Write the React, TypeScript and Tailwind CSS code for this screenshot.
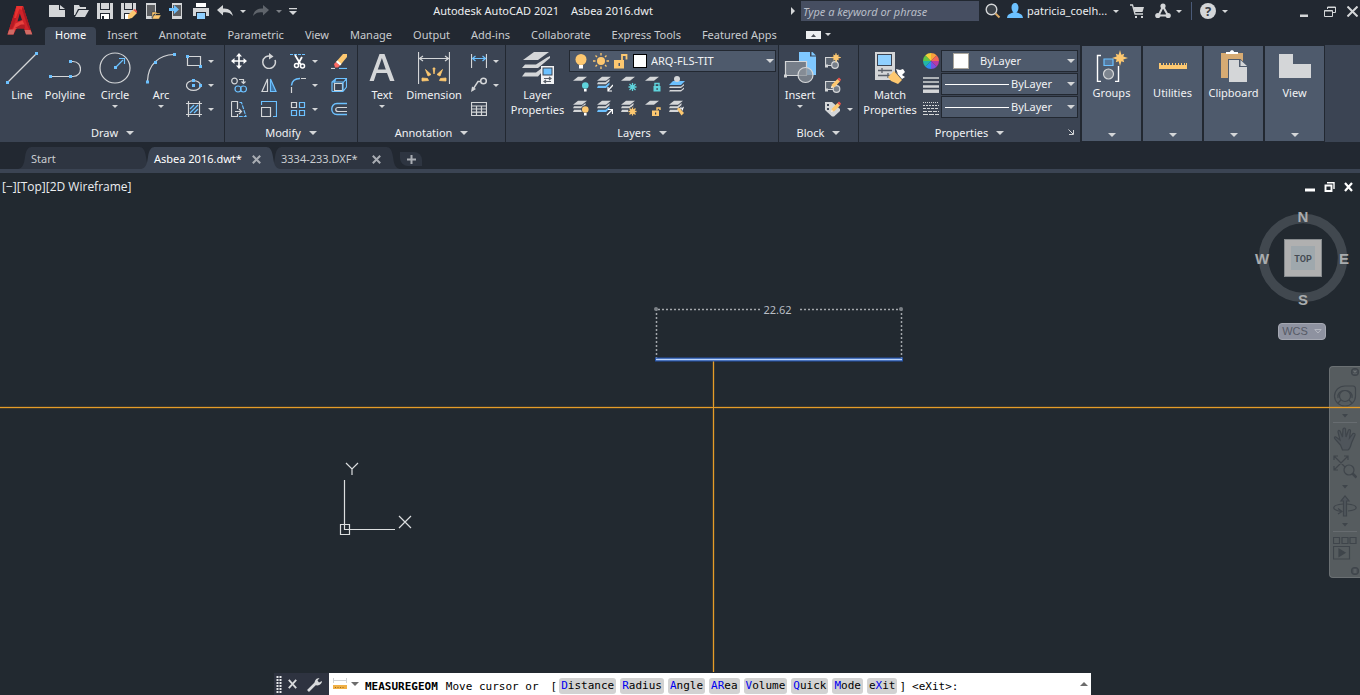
import React from "react";

const B = "#6cc1ff";
const G = "#d4d6d8";
const Y = "#fdc870";
const T = "#5fd3dc";

type Kids = { children?: React.ReactNode };

function Ico({ children, s = 16 }: Kids & { s?: number }) {
  return (
    <svg width={s} height={s} viewBox={`0 0 ${s} ${s}`} fill="none" stroke={G} strokeWidth="1.2" className="block shrink-0" aria-hidden="true">
      {children}
    </svg>
  );
}

function Caret({ big = false, className = "" }: { big?: boolean; className?: string }) {
  return big ? (
    <svg width="8" height="4" viewBox="0 0 8 4" className={"block shrink-0 " + className} aria-hidden="true">
      <path d="M0 0H8L4 4Z" fill="#d4d6d8" />
    </svg>
  ) : (
    <svg width="6" height="3" viewBox="0 0 6 3" className={"block shrink-0 " + className} aria-hidden="true">
      <path d="M0 0H6L3 3Z" fill="#d4d6d8" />
    </svg>
  );
}

function Dot({ x, y, c = B }: { x: number; y: number; c?: string }) {
  return <rect x={x - 1.5} y={y - 1.5} width="3" height="3" fill={c} stroke="none" />;
}

/* ---------- shared icon parts ---------- */

function Stack({ blue = -1, n = 3 }: { blue?: number; n?: number }) {
  return (
    <g stroke="none" fill={G}>
      <path d="M5 .7H14L9 4.800H0Z" />
      {n > 1 && <path d="M1 6.300H8.500L12.500 3V5L9 8.300H0Z" fill={blue === 1 ? B : G} />}
      {n > 2 && <path d="M1 9.800H8.500L12.500 6.500V8.500L9 12H0Z" fill={blue > 0 ? B : G} />}
    </g>
  );
}

function Bulb({ x, y, c }: { x: number; y: number; c: string }) {
  return (
    <g stroke="none">
      <circle cx={x} cy={y} r="4.2" fill="#3b4453" />
      <circle cx={x} cy={y} r="3.3" fill={c} />
      <rect x={x - 1.3} y={y + 3.4} width="2.6" height="2.6" fill="#fff" />
    </g>
  );
}

function Burst({ x, y, r = 5 }: { x: number; y: number; r?: number }) {
  const pts = Array.from({ length: 16 }, (_, i) => {
    const a = (i * Math.PI) / 8;
    const k = i % 2 ? r * 0.45 : i % 4 ? r * 0.75 : r;
    return `${x + Math.sin(a) * k},${y - Math.cos(a) * k}`;
  });
  return <polygon points={pts.join(" ")} fill={Y} stroke="none" />;
}

function Pencil() {
  return (
    <g stroke="none">
      <path d="M7 7.5L12.5 2L15 4.5L9.5 10L6 11Z" fill={Y} />
      <path d="M12.5 2L14 .5L16 2.5L15 4.5Z" fill="#f0544c" />
      <path d="M6 11L6.8 8.8L8.2 10.3Z" fill="#fff" />
    </g>
  );
}

/* ---------- logo ---------- */

function Logo() {
  return (
    <svg width="26" height="29" viewBox="0 0 26 29" aria-label="AutoCAD" role="img">
      <path d="M9.500 0H16L25 28H19L17 22.500H9.500L6.500 28.500H.5Z" fill="#cf2229" />
      <path d="M9.500 0L13 1L6 21L.5 28.500Z" fill="#b51c24" />
      <path d="M9.500 0H16L17.500 5L12.500 3L9 12L7 12Z" fill="#e8322f" />
      <path d="M16 0L25 28L20.500 20L15 3Z" fill="#a81a22" />
      <path d="M12.800 7.500L15 14L10.500 15.500Z" fill="#222831" />
      <path d="M15.500 14.500L17.500 18.500L5.500 24.500L8.500 17.500Z" fill="#e8423e" />
      <path d="M8 22L14 18.500L17.500 18.500L18 22.500Z" fill="#b31c24" />
      <path d="M.5 28.500L2.200 23.500L8 23.500L6.500 28.500ZM19 28.500L17.500 24H23.500L25.300 28.500Z" fill="#d06a64" />
    </svg>
  );
}

/* ---------- quick access ---------- */

const quick: { name: string; icon: React.ReactNode }[] = [
  { name: "New", icon: <path d="M0 2H10V7H16V14H0ZM11 2L16 6H11Z" fill={G} stroke="none" /> },
  { name: "Open", icon: <path d="M1 2H6L7 4H13V6H5L2 12H1ZM6 7H16L12 14H2Z" fill={G} stroke="none" /> },
  {
    name: "Save",
    icon: (
      <g stroke="none">
        <path d="M0 0H16V16H0Z" fill={G} />
        <path d="M3 0H13V7H3Z" fill="#222831" />
        <path d="M4 0H12V6H4Z" fill={G} />
        <path d="M3 10H13V16H3Z" fill="#222831" />
        <path d="M4 11H12V16H4Z" fill="#fff" />
        <path d="M5 13H7V16H5Z" fill="#222831" />
      </g>
    ),
  },
  {
    name: "Save As",
    icon: (
      <g stroke="none">
        <path d="M0 0H15V8L8 16H0Z" fill={G} />
        <path d="M3 0H12V7H3Z" fill="#222831" />
        <path d="M4 0H11V6H4Z" fill={G} />
        <path d="M3 10H10L7 16H3Z" fill="#222831" />
        <path d="M4 11H8V16H4Z" fill="#fff" />
        <path d="M7 12L12 7L16 10L11 15L7 16Z" fill={Y} />
        <path d="M12 7L14 6L16 8V10Z" fill="#f0544c" />
      </g>
    ),
  },
  {
    name: "Open from Web",
    icon: (
      <g stroke="none">
        <path d="M1 0H11V16H1Z" fill={G} />
        <path d="M2 2H10V13H2Z" fill="#5d5f62" />
        <path d="M7 9H11L12 10H15V11H9L7 15ZM9 12H16L14 16H7Z" fill={Y} stroke="#222831" strokeWidth=".4" />
      </g>
    ),
  },
  {
    name: "Save to Web",
    icon: (
      <g stroke="none">
        <path d="M3 0H13V16H3Z" fill={G} />
        <path d="M4 2H12V13H4Z" fill="#5d5f62" />
        <path d="M0 5H5V2L10 6.500L5 11V8H0Z" fill={B} />
      </g>
    ),
  },
  {
    name: "Plot",
    icon: (
      <g stroke="none">
        <path d="M3 0H13V4H3Z" fill="#fff" />
        <path d="M0 5H16V13H13V9H3V13H0Z" fill={G} />
        <path d="M4 10H12V16H4Z" fill="#8fd0ff" />
      </g>
    ),
  },
];

function TinyBtn({ label, className, children }: Kids & { label: string; className: string }) {
  return (
    <button type="button" aria-label={label} className={"flex h-full shrink-0 items-center justify-center " + className}>
      {children}
    </button>
  );
}

function TitleBar() {
  return (
    <div className="flex h-[22px] items-center text-[11px] text-[#eceef0]">
      {quick.map((q) => (
        <TinyBtn key={q.name} label={q.name} className="w-6">
          <Ico>{q.icon}</Ico>
        </TinyBtn>
      ))}
      <TinyBtn label="Undo" className="w-6">
        <Ico>
          <path d="M0 7L6 2V5.500C12 5 15 8 16 13C13 9.500 10 9 6 9.500V12.500Z" fill={G} stroke="none" />
        </Ico>
      </TinyBtn>
      <TinyBtn label="Undo list" className="w-3">
        <Caret />
      </TinyBtn>
      <TinyBtn label="Redo" className="w-6">
        <Ico>
          <path d="M16 7L10 2V5.500C4 5 1 8 0 13C3 9.500 6 9 10 9.500V12.500Z" fill="#5f646b" stroke="none" />
        </Ico>
      </TinyBtn>
      <TinyBtn label="Redo list" className="w-3">
        <Caret className="opacity-50" />
      </TinyBtn>
      <TinyBtn label="Customize Quick Access Toolbar" className="w-4">
        <svg width="8" height="7" viewBox="0 0 8 7" aria-hidden="true">
          <path d="M0 0H8V1.200H0ZM0 3H8L4 7Z" fill={G} />
        </svg>
      </TinyBtn>
      <div className="flex flex-1 justify-center gap-3 whitespace-nowrap">
        <h1>Autodesk AutoCAD 2021</h1>
        <span>Asbea 2016.dwt</span>
      </div>
      <TinyBtn label="Hide search" className="w-4">
        <svg width="4" height="8" viewBox="0 0 4 8" aria-hidden="true">
          <path d="M0 0V8L4 4Z" fill={G} />
        </svg>
      </TinyBtn>
      <input
        aria-label="Search"
        placeholder="Type a keyword or phrase"
        className="h-5 w-[178px] min-w-0 bg-[#464e61] px-0.5 text-[11px] italic text-white outline-none placeholder:text-[#b9bec8]"
      />
      <TinyBtn label="Search help" className="w-7">
        <Ico>
          <circle cx="6.500" cy="6.500" r="5.300" stroke={G} strokeWidth="1.400" fill="#3a4047" />
          <path d="M10.500 10.500L14.500 14.500" stroke="#d9a866" strokeWidth="2" />
        </Ico>
      </TinyBtn>
      <button type="button" className="flex h-full shrink-0 items-center gap-1">
        <Ico>
          <path d="M4.500 4.500C4.500 1.500 6 0 8 0C10 0 11.500 1.500 11.500 4.500C11.500 7 10.500 8.500 9.500 9.500C13 10.500 15.500 11 16 15H0C.5 11 3 10.500 6.500 9.500C5.500 8.500 4.500 7 4.500 4.500Z" fill={B} stroke="none" />
        </Ico>
        <span className="w-[82px] text-left">patricia_coelh...</span>
        <Caret />
      </button>
      <TinyBtn label="App store" className="w-9">
        <Ico>
          <path d="M1 2H3.500L6 11H14" strokeWidth="1.300" />
          <path d="M4.500 4H15L13.500 9H5.800Z" fill={G} stroke="none" />
          <path d="M6 13H8V15H6ZM12 13H14V15H12Z" fill={G} stroke="none" />
        </Ico>
      </TinyBtn>
      <TinyBtn label="Autodesk App" className="w-4">
        <Ico>
          <path d="M8 3.500L3.500 12.500H13" stroke={G} strokeWidth="2" />
          <path d="M8 3.500L12.500 11.500" stroke={G} strokeWidth="2" />
          <g fill={G} stroke="none">
            <circle cx="8" cy="3" r="2.600" />
            <circle cx="2.800" cy="12.500" r="2.600" />
            <circle cx="13.200" cy="12.500" r="2.600" />
          </g>
        </Ico>
      </TinyBtn>
      <TinyBtn label="Autodesk App list" className="w-4">
        <Caret />
      </TinyBtn>
      <span className="ml-1 mr-2 h-[18px] w-px bg-[#4a5a78]" />
      <TinyBtn label="Help" className="w-4">
        <span className="flex size-4 items-center justify-center rounded-full bg-[#d4d6d8] text-[13px] font-bold leading-4 text-[#3a4047]">?</span>
      </TinyBtn>
      <TinyBtn label="Help list" className="w-[18px]">
        <Caret />
      </TinyBtn>
      <span className="w-[58px]" />
      <TinyBtn label="Minimize" className="w-6">
        <svg width="8" height="12" viewBox="0 0 8 12" aria-hidden="true">
          <path d="M0 9.500H8V12H0Z" fill={G} />
        </svg>
      </TinyBtn>
      <TinyBtn label="Restore" className="w-7">
        <svg width="12" height="11" viewBox="0 0 12 11" fill="none" stroke={G} aria-hidden="true">
          <path d="M3.500 3V1H11.500V6.500H9M.5 4.500H8.500V10.500H.5ZM3.500 1.500H11.500M.5 5H8.500" />
        </svg>
      </TinyBtn>
      <TinyBtn label="Close" className="w-4">
        <svg width="11" height="11" viewBox="0 0 11 11" stroke={G} strokeWidth="2" aria-hidden="true">
          <path d="M.5.5L10.500 10.500M10.500.5L.5 10.500" />
        </svg>
      </TinyBtn>
    </div>
  );
}

const menus = ["Home", "Insert", "Annotate", "Parametric", "View", "Manage", "Output", "Add-ins", "Collaborate", "Express Tools", "Featured Apps"];

function MenuTabs() {
  return (
    <nav className="flex h-[23px] items-end gap-px text-[11px] text-[#c9ccd0]">
      {menus.map((m, i) => (
        <button
          key={m}
          type="button"
          className={"h-[18px] shrink-0 rounded-t-sm px-2.5 pb-0.5 leading-[16px] " + (i === 0 ? "bg-[#3b4453] text-white" : "")}
        >
          {m}
        </button>
      ))}
      <button type="button" aria-label="Minimize ribbon" className="mb-1.5 ml-[18px] flex h-2 w-[15px] items-center justify-center bg-[#eceef0]">
        <svg width="5" height="3" viewBox="0 0 5 3" aria-hidden="true">
          <path d="M0 3H5L2.500 0Z" fill="#4a4f57" />
        </svg>
      </button>
      <button type="button" aria-label="Ribbon options" className="mb-2 ml-0.5 p-px">
        <Caret />
      </button>
    </nav>
  );
}

/* ---------- ribbon ---------- */

function Big({ label, lines, icon, drop, className }: { label?: string; lines?: string[]; icon: React.ReactNode; drop?: boolean; className: string }) {
  return (
    <button type="button" className={"flex shrink-0 flex-col items-center self-start pt-[3px] text-[11px] leading-[15px] " + className}>
      <Ico s={32}>{icon}</Ico>
      <span className="mt-[3px] flex flex-col items-center whitespace-nowrap">
        {lines ? lines.map((l) => <span key={l}>{l}</span>) : label}
      </span>
      {drop && <Caret className="mt-[3px]" />}
    </button>
  );
}

function Small({ label, icon, drop }: { label: string; icon: React.ReactNode; drop?: boolean }) {
  return (
    <div className="flex h-6 items-center">
      <button type="button" aria-label={label} className="flex h-6 w-6 items-center justify-center">
        <Ico>{icon}</Ico>
      </button>
      {drop && (
        <button type="button" aria-label={label + " list"} className="flex h-6 w-2.5 items-center justify-center">
          <Caret />
        </button>
      )}
    </div>
  );
}

function Panel({ title, className, children, launcher }: Kids & { title: string; className: string; launcher?: boolean }) {
  return (
    <section className={"flex shrink-0 flex-col border-r border-[#222831] bg-[#3b4453] text-[#f1f2f4] " + className}>
      <div className="flex flex-1 items-start pt-1">{children}</div>
      <div className="relative flex h-[19px] shrink-0 items-center justify-center">
        <button type="button" className="flex items-center gap-2 text-[11px] leading-[18px]">
          {title}
          <Caret big />
        </button>
        {launcher && (
          <button type="button" aria-label={title + " settings"} className="absolute right-1.5 top-1.5">
            <svg width="6" height="6" viewBox="0 0 6 6" fill="none" stroke={G} aria-hidden="true">
              <path d="M.5.5L5 5M5.500 1V5.500H1" />
            </svg>
          </button>
        )}
      </div>
    </section>
  );
}

function Draw() {
  return (
    <Panel title="Draw" className="ml-px w-[224px]">
      <Big label="Line" className="w-[42px]" icon={<><path d="M2 30L30 2" /><Dot x={1.5} y={30.5} /><Dot x={30.5} y={1.5} /></>} />
      <Big
        label="Polyline"
        className="w-[44px]"
        icon={<><path d="M1 24.500H21M22 9.500H24C34 9.500 34 24.500 24 24.500H22" /><Dot x={1.5} y={24.5} /><Dot x={21.5} y={24.5} /><Dot x={21.5} y={9.5} /></>}
      />
      <Big
        label="Circle"
        drop
        className="w-[56px]"
        icon={<><circle cx="16" cy="16" r="15" /><path d="M16 16L24 8M20 6.500H25.500V12" stroke={B} /><Dot x={16.5} y={15.5} /></>}
      />
      <Big
        label="Arc"
        drop
        className="w-[36px]"
        icon={<><path d="M2.500 29C3 12 14 3 29 2.500" /><Dot x={2.5} y={30} /><Dot x={10.5} y={10.5} /><Dot x={29.5} y={2.5} /></>}
      />
      <div className="ml-[3px]">
        <Small label="Rectangle" drop icon={<><path d="M1.500 3.500H14.500V12.500H1.500Z" /><Dot x={1.5} y={3.5} /><Dot x={14.5} y={13.5} /></>} />
        <Small label="Ellipse" drop icon={<><ellipse cx="7.500" cy="8.500" rx="7" ry="4.800" /><Dot x={7.5} y={3.5} /><Dot x={7.5} y={8.5} /><Dot x={14.5} y={8.5} /></>} />
        <Small
          label="Hatch"
          drop
          icon={<><path d="M0 2.500H16M0 13.500H16M2.500 0V16M13.500 0V16" /><path d="M4 8L8 4M4 12L12 4M8 12L12 8" stroke={B} strokeWidth="1.300" /></>}
        />
      </div>
    </Panel>
  );
}

function Modify() {
  return (
    <Panel title="Modify" className="w-[133px]">
      <div className="ml-0.5">
        <Small
          label="Move"
          icon={<><path d="M8 1V15M1 8H15" stroke="#fff" strokeWidth="1.600" /><path d="M8 0L11 3.500H5ZM8 16L11 12.500H5ZM0 8L3.500 5V11ZM16 8L12.500 5V11Z" fill="#fff" stroke="none" /></>}
        />
        <Small
          label="Copy"
          icon={<><circle cx="3.500" cy="4" r="2.800" /><path d="M8 2.500H12.500V6M10.500 4.500L12.500 6.500L14.500 4.500" /><circle cx="7" cy="12" r="3" stroke={B} /><circle cx="12.500" cy="12" r="3" stroke={B} /></>}
        />
        <Small label="Stretch" icon={<><path d="M.5 .5H6.500V8M.5 .5V15.500H6.500V13" /><path d="M4 10.500H10M8 8L10.500 10.500L8 13" /><path d="M8.500 1.500H10.500L15 15.500H8" stroke={B} strokeDasharray="4 1" /></>} />
      </div>
      <div className="ml-1.5">
        <Small label="Rotate" icon={<><path d="M10 3.200A6.300 6.300 0 1 0 14 7" strokeWidth="1.500" /><path d="M8 0L12.500 3.500L8 6.500Z" fill={G} stroke="none" /></>} />
        <Small label="Mirror" icon={<><path d="M6.500 2V14.500H1Z" /><path d="M9.500 2V14.500H15Z" stroke={B} fill="#3f74a5" /></>} />
        <Small label="Scale" icon={<><path d="M.5 6.500H9.500V15.500H.5Z" /><path d="M.5 4V.5H15.500V15.500H12" stroke={B} /></>} />
      </div>
      <div className="ml-[5px]">
        <Small
          label="Trim"
          drop
          icon={<><path d="M0 1.500H16" stroke={B} strokeDasharray="3 1" /><path d="M5 2L11 12M12 4L8 11" stroke="#fff" strokeWidth="1.800" /><circle cx="6.500" cy="12.500" r="2" stroke="#fff" strokeWidth="1.500" /><circle cx="12.500" cy="13" r="2" stroke="#fff" strokeWidth="1.500" /></>}
        />
        <Small label="Fillet" drop icon={<><path d="M1.500 16V10M11 1.500H16" /><path d="M1.500 8.500C2 4 5 1.500 10 1.500" stroke={B} strokeWidth="1.500" /></>} />
        <Small
          label="Array"
          drop
          icon={<><path d="M1.500 1.500H6.500V6.500H1.500Z" /><path d="M9.500 1.500H14.500V6.500H9.500ZM1.500 9.500H6.500V14.500H1.500ZM9.500 9.500H14.500V14.500H9.500Z" stroke={B} /></>}
        />
      </div>
      <div className="ml-[7px]">
        <Small
          label="Erase"
          icon={<><path d="M0 15.500H4" /><path d="M8 15.500H16" stroke={B} /><path d="M5 9L12 1H16V4L9 12.500Z" fill={Y} stroke="none" /><path d="M3 11L5 9L9 12.500L7 14.500H4Z" fill="#ff6b62" stroke="none" /><path d="M5 9L6.500 7.500L10.500 11L9 12.500Z" fill="#fff" stroke="none" /></>}
        />
        <Small label="Explode" icon={<><path d="M3.500 6.500H11.500V13.500H3.500Z" /><path d="M1 14.500V5L5 1.500H15.500V10L12 14.500M5 1.500L3 6M15.500 1.500L11.500 6.500M1 14.500H12M1 5H12V14" stroke={B} /></>} />
        <Small label="Offset" icon={<><path d="M16 2.500H6C-1 2.500 -1 13.500 6 13.500H16" stroke={B} strokeWidth="1.400" /><path d="M16 6.500H7C4 6.500 4 10.500 7 10.500H16" /></>} />
      </div>
    </Panel>
  );
}

function Annotation() {
  return (
    <Panel title="Annotation" className="w-[148px]">
      <Big label="Text" drop className="w-[48px]" icon={<path d="M13.500 2H18.500L28.500 29H24L21 21H10.500L7.800 29H3.500ZM15.900 6L11.800 17.500H19.800Z" fill={G} stroke="none" fillRule="evenodd" />} />
      <Big
        label="Dimension"
        className="w-[56px]"
        icon={
          <>
            <path d="M.5 0V32M31.500 0V32M2 6.500H30M5 4L1.500 6.500L5 9M27 4L30.500 6.500L27 9" />
            <path d="M16 22L15 16H17ZM10 24L7.500 17.500L13 22.500ZM22 24L24.500 17.500L19 22.500ZM4 26L9.500 26.500L10.500 28.500L4 29ZM28 26L22.500 26.500L21.500 28.500L28 29Z" fill={Y} stroke={Y} strokeWidth=".8" />
          </>
        }
      />
      <div className="ml-[5px]">
        <Small label="Linear" drop icon={<><path d="M.5 1V15M15.500 1V15" /><path d="M2 5.500H14M4.500 3L1.500 5.500L4.500 8M11.500 3L14.500 5.500L11.500 8" stroke={B} /></>} />
        <Small label="Leader" drop icon={<><circle cx="12.500" cy="4" r="2.800" strokeWidth="1.500" /><path d="M10 4.500H7L1.500 13" strokeWidth="1.400" /><path d="M0 15L1 9.500L5 12Z" fill={G} stroke="none" /></>} />
        <Small label="Table" icon={<path d="M.5 1.500H15.500V14.500H.5ZM.5 5H15.500M.5 8H15.500M.5 11.200H15.500M5.500 5V14M10.500 5V14" />} />
      </div>
    </Panel>
  );
}

function Lock({ x, y, c, open }: { x: number; y: number; c: string; open?: boolean }) {
  return (
    <g>
      <rect x={x} y={y} width="7" height="5.500" fill={c} stroke="none" />
      <path d={open ? `M${x + 5} ${y}V${y - 2.5}H${x + 8}V${y - 0.5}` : `M${x + 1.5} ${y}V${y - 2.5}H${x + 5.5}V${y}`} stroke={c} strokeWidth="1.400" />
      <rect x={x + 3} y={y + 2} width="1.200" height="2" fill="#3b4453" stroke="none" />
    </g>
  );
}

function Star({ x, y, c }: { x: number; y: number; c: string }) {
  return <path d={`M${x - 4} ${y}H${x + 4}M${x} ${y - 4}V${y + 4}M${x - 3} ${y - 3}L${x + 3} ${y + 3}M${x + 3} ${y - 3}L${x - 3} ${y + 3}`} stroke={c} strokeWidth="1.300" />;
}

const layerRows: { name: string; icon: React.ReactNode }[][] = [
  [
    { name: "Layer Off", icon: <><Stack n={1} /><Bulb x={12.3} y={9.5} c={T} /></> },
    { name: "Layer Isolate", icon: <><Stack blue={2} /><path d="M16 9L11 14.500M11 11V15H15" stroke="#fff" /></> },
    { name: "Layer Freeze", icon: <><Stack n={1} /><Star x={11.5} y={11} c={T} /></> },
    { name: "Layer Lock", icon: <><Stack n={1} /><Lock x={8.5} y={10} c={T} /></> },
    { name: "Make Current", icon: <g stroke="none"><path d="M4 5H16L12 9H0Z" fill={B} /><path d="M1 10.500H12L15 8V9.500L12 12H0ZM1 14H12L15 11.500V13L12 15.500H0Z" fill={G} /><circle cx="8" cy="3" r="3" fill={G} /></g> },
  ],
  [
    { name: "Turn All Layers On", icon: <><Stack /><Bulb x={12.3} y={9.5} c={Y} /></> },
    { name: "Layer Unisolate", icon: <><Stack blue={2} /><path d="M10 15L15 10M11 9.500H15.500V14" stroke="#fff" /></> },
    { name: "Thaw All Layers", icon: <><Stack /><circle cx="11.500" cy="11.500" r="4.500" fill="#3b4453" stroke="none" /><Star x={11.5} y={11.5} c={Y} /><circle cx="11.500" cy="11.500" r="2.500" fill={Y} stroke="none" /></> },
    { name: "Layer Unlock", icon: <><Stack n={1} /><Lock x={7} y={10.5} c={Y} open /></> },
    { name: "Match Layer", icon: <><Stack /><path d="M8 9L10 7.500L15 13L12.500 15.500Z" fill={Y} stroke="none" /><path d="M12 8.500L15 6.500L13.500 11Z" fill="#fff" stroke="none" /></> },
  ],
];

function Layers() {
  return (
    <Panel title="Layers" className="w-[273px]">
      <Big
        lines={["Layer", "Properties"]}
        className="w-[63px]"
        icon={
          <g stroke="none">
            <path d="M12 0H27L16 8H1ZM3 12.500H14L25 5.500L28 4V6L16 16H0ZM3 20.500H14L20 16V20L16 24.500H0Z" fill={G} />
            <path d="M19 14H32V32H19Z" fill="#f1f2f4" />
            <path d="M20.500 15.500H30.500V23.500H20.500Z" fill="#3b4453" />
            <path d="M21.500 16.500H29.500V22.500H21.500Z" fill={B} />
            <path d="M22 26.500H29M27 25L29 26.500L27 28M29 29.500H22M24 28L22 29.500L24 31" stroke="#5a6069" />
          </g>
        }
      />
      <div className="flex flex-1 flex-col pr-0.5 pt-px">
        <div className="flex h-[22px] items-center gap-1 border border-[#222831] bg-[#4e5a6c] pl-[3px] pr-px">
          <Ico><circle cx="8" cy="6.500" r="5.500" fill={Y} stroke="none" /><path d="M6 12H10V15.500H6Z" fill="#fff" stroke="none" /></Ico>
          <Ico>
            <circle cx="8" cy="8" r="4" fill={Y} stroke="none" />
            <path d="M8 0V2.500M8 13.500V16M0 8H2.500M13.500 8H16M2.500 2.500L4 4M12 12L13.500 13.500M2.500 13.500L4 12M12 4L13.500 2.500" stroke={Y} strokeWidth="1.300" />
          </Ico>
          <Ico><path d="M1 7H11V15.500H1Z" fill={Y} stroke="none" /><path d="M9 7V2H13.500V6.500" stroke={Y} strokeWidth="1.800" /><path d="M5.500 10H7V13H5.500Z" fill="#4e5a6c" stroke="none" /></Ico>
          <span className="size-[14px] border border-black bg-white" />
          <select aria-label="Layer" className="min-w-0 flex-1 appearance-none bg-transparent text-[11px] leading-4 text-[#f1f2f4] outline-none">
            <option>ARQ-FLS-TIT</option>
          </select>
          <Caret big className="pointer-events-none -ml-3" />
        </div>
        {layerRows.map((r, i) => (
          <div key={i} className="flex">
            {r.map((b) => (
              <Small key={b.name} label={b.name} icon={b.icon} />
            ))}
          </div>
        ))}
      </div>
    </Panel>
  );
}

function Block() {
  return (
    <Panel title="Block" className="w-20">
      <Big
        label="Insert"
        drop
        className="w-[42px]"
        icon={
          <>
            <path d="M15 -1H26V4.500H32V23H15Z" fill="#7fc8ff" stroke="none" />
            <path d="M27.500 -1L32 3.500H27.500Z" fill="#7fc8ff" stroke="none" />
            <path d="M1.500 9.500H22.500V23.500H1.500Z" fill="#767e89" />
            <circle cx="21.500" cy="23" r="7.500" fill="#8b9199" fillOpacity=".75" />
            <Dot x={1.5} y={24} c={G} />
          </>
        }
      />
      <div>
        <Small label="Create Block" icon={<><path d="M.5 4.500H11.500V12.500H.5Z" fill="#5d6672" /><circle cx="10" cy="12" r="3.300" fill="#767e89" /><Dot x={1.5} y={13} c={G} /><Burst x={11} y={4.5} r={5.5} /></>} />
        <Small label="Edit Block" icon={<><path d="M.5 4.500H11.500V12.500H.5Z" fill="#5d6672" /><circle cx="11.500" cy="12" r="3.300" fill="#767e89" /><Dot x={1.5} y={13} c={G} /><Pencil /></>} />
        <Small label="Edit Attributes" drop icon={<><path d="M0 1H7L15 8V10L9 15.500H7L0 9Z" fill={G} stroke="none" /><path d="M2 3H4V5H2ZM2 7H4V9H2Z" fill="#3b4453" stroke="none" /><Pencil /></>} />
      </div>
    </Panel>
  );
}

function Combo({ label, line }: { label: string; line?: boolean }) {
  return (
    <div className="flex h-[22px] items-center border border-[#222831] bg-[#4e5a6c] pl-[3px] pr-0.5">
      {line ? <span className="mr-0.5 h-px w-16 bg-white" /> : <span className="ml-2 mr-[11px] size-4 border border-[#a9a59c] bg-white" />}
      <select aria-label={label} className="min-w-0 flex-1 appearance-none bg-transparent text-[11px] leading-4 text-[#f1f2f4] outline-none">
        <option>ByLayer</option>
      </select>
      <Caret big className="pointer-events-none -ml-2" />
    </div>
  );
}

const wheel = ["#f9a13c", "#f2675a", "#b93aa6", "#7a4fe0", "#2c8cf0", "#22b6a8", "#62c644", "#f2cf3a"];

function ColorWheel() {
  return (
    <Ico>
      {wheel.map((c, i) => {
        const a = (i * Math.PI) / 4;
        const b = ((i + 1) * Math.PI) / 4;
        return <path key={c} d={`M8 8L${8 + 8 * Math.sin(a)} ${8 - 8 * Math.cos(a)}A8 8 0 0 1 ${8 + 8 * Math.sin(b)} ${8 - 8 * Math.cos(b)}Z`} fill={c} stroke="none" />;
      })}
    </Ico>
  );
}

function Properties() {
  return (
    <Panel title="Properties" launcher className="w-[222px]">
      <Big
        lines={["Match", "Properties"]}
        className="w-[62px]"
        icon={
          <g stroke="none">
            <path d="M1 0H21V28H1Z" fill={G} />
            <path d="M3 2H18V14H3Z" fill="#3b4453" />
            <path d="M4 3H17V13H4Z" fill="#8fd0ff" />
            <path d="M4 18.500H18M4 23.500H18M8 16V21M14 21V26M8 21" stroke="#5a6069" strokeWidth="1.300" />
            <path d="M14 25L17 29L24 32L28 28L20 19Z" fill={Y} />
            <path d="M21 19L24 22L22 17L26 18L29 17L31 20L28 23L31 25L28 27Z" fill="#fff" />
          </g>
        }
      />
      <div className="flex w-5 flex-col items-center">
        <span className="flex h-6 items-center"><ColorWheel /></span>
        <span className="flex h-6 items-center"><Ico><path d="M0 1H16M0 5H16" strokeWidth="1.500" /><path d="M0 9.500H16" strokeWidth="2.500" /><path d="M0 14.200H16" strokeWidth="3.500" /></Ico></span>
        <span className="flex h-6 items-center"><Ico><path d="M0 1.500H16" strokeDasharray="1 1" /><path d="M0 4.500H16" strokeDasharray="2 1" /><path d="M0 7.500H16" strokeDasharray="3 1" /><path d="M0 10.500H16" strokeDasharray="4 1" /><path d="M0 13.500H16" strokeDasharray="5 1" /></Ico></span>
      </div>
      <div className="flex flex-1 flex-col gap-px pr-0.5 pt-px">
        <Combo label="Object color" />
        <Combo label="Lineweight" line />
        <Combo label="Linetype" line />
      </div>
    </Panel>
  );
}

const collapsed: { name: string; icon: React.ReactNode }[] = [
  {
    name: "Groups",
    icon: (
      <>
        <path d="M5 5.500H1.500V31.500H5M19 31.500H22.500V16" stroke="#fff" strokeWidth="1.400" />
        <path d="M8 9H17V15.500H8Z" stroke={B} fill="#56789c" />
        <circle cx="12.500" cy="24" r="5" fill="#7d858f" />
        <Burst x={24} y={8} r={8} />
      </>
    ),
  },
  { name: "Utilities", icon: <path d="M2 13H4V15H6V13H7V15H9V13H10V15H12V13H13V15H15V13H16V15H18V13H19V15H21V13H22V15H24V13H25V15H27V13H28V15H29V13H30V19H2Z" fill={Y} stroke="none" /> },
  {
    name: "Clipboard",
    icon: (
      <g stroke="none">
        <path d="M3 3H25V28H3Z" fill="#d7ab73" />
        <path d="M8 4V2H12C12 -.5 16 -.5 16 2H20V4Z" fill="#fff" />
        <path d="M10 9H22.500L30 16V32H10Z" fill="#4e5a6c" />
        <path d="M11 10H21V17H29V32H11ZM22.500 10L29 16H22.500Z" fill={G} />
      </g>
    ),
  },
  { name: "View", icon: <path d="M0 4H14V14H32V28H0Z" fill={G} stroke="none" /> },
];

function Ribbon() {
  return (
    <div className="flex h-[97px] shrink-0 bg-[#3b4453]">
      <Draw />
      <Modify />
      <Annotation />
      <Layers />
      <Block />
      <Properties />
      {collapsed.map((c) => (
        <div key={c.name} className="shrink-0 border-r border-[#222831] bg-[#222831] py-px pl-px">
          <button type="button" className="flex h-full w-[59px] flex-col items-center bg-[#4e5a6c] pb-1 pt-1 text-[11px] leading-[15px] text-[#f1f2f4]">
            <Ico s={32}>{c.icon}</Ico>
            <span className="mt-[3px] flex-1">{c.name}</span>
            <Caret big />
          </button>
        </div>
      ))}
    </div>
  );
}

/* ---------- file tabs ---------- */

function Edge({ on, flip }: { on?: boolean; flip?: boolean }) {
  return (
    <svg width="14" height="22" viewBox="0 0 14 22" className="block shrink-0" aria-hidden="true">
      <path
        d={flip ? "M14 22C9 21 8 17 7 10C6 3 4 0 0 0V22Z" : "M0 22C5 21 6 17 7 10C8 3 10 0 14 0V22Z"}
        fill={on ? "#3b4453" : "#2e3541"}
      />
    </svg>
  );
}

function FileTab({ name, on, closable, className }: { name: string; on?: boolean; closable?: boolean; className: string }) {
  return (
    <div className={"-mr-3 flex h-[22px] " + (on ? "relative z-10 " : "") + className}>
      <Edge on={on} />
      <div className={"-mx-px flex flex-1 items-center justify-between pr-1.5 pt-0.5 " + (on ? "bg-[#3b4453] text-white" : "bg-[#2e3541] text-[#c9ccd0]")}>
        <button type="button" className="whitespace-nowrap">{name}</button>
        {closable && (
          <button type="button" aria-label={"Close " + name}>
            <svg width="9" height="9" viewBox="0 0 9 9" stroke="#a9adb3" strokeWidth="2" aria-hidden="true">
              <path d="M.8.8L8.200 8.200M8.200.8L.8 8.200" />
            </svg>
          </button>
        )}
      </div>
      <Edge on={on} flip />
    </div>
  );
}

function FileTabs() {
  return (
    <div className="flex h-[31px] shrink-0 items-end border-b-4 border-[#3b4453] bg-[#222831] pl-[18px] text-[11px]">
      <FileTab name="Start" className="w-[135px]" />
      <FileTab name="Asbea 2016.dwt*" on closable className="w-[139px]" />
      <FileTab name="3334-233.DXF*" closable className="w-[132px]" />
      <button type="button" aria-label="New tab" className="mb-[3px] ml-3 flex h-3.5 w-[22px] items-center justify-center rounded-bl-lg rounded-tr-lg bg-[#2e3541]">
        <svg width="9" height="9" viewBox="0 0 9 9" stroke="#a9adb3" strokeWidth="2" aria-hidden="true">
          <path d="M4.500 0V9M0 4.500H9" />
        </svg>
      </button>
    </div>
  );
}

/* ---------- drawing area ---------- */

function Drawing() {
  return (
    <svg className="pointer-events-none absolute inset-0 h-full w-full" fill="none" aria-label="Drawing">
      <path d="M0 234.500H2600M713.500 187V2000" stroke="#e09a28" strokeWidth="3" strokeOpacity=".16" />
      <path d="M0 234.500H2600M713.500 187V2000" stroke="#e69c28" />
      <path d="M656.500 136V186M901.500 136V186M658 136.500H760M800 136.500H900" stroke="#a3a7ab" strokeWidth="1.500" strokeDasharray="2 2" />
      <circle cx="656" cy="136" r="2" fill="#7b8086" />
      <circle cx="901" cy="136" r="2" fill="#7b8086" />
      <path d="M655 186.500H903" stroke="#2453a8" strokeWidth="4" />
      <path d="M656 186.500H902" stroke="#bcd4fb" strokeWidth="1.400" />
      <text x="777.500" y="141" textAnchor="middle" fill="#b9bec4" fontSize="11" fontFamily="'Noto Sans','Open Sans',sans-serif">22.62</text>
      <g stroke="#dcdedf">
        <path d="M344.500 307V356.500H395M340.500 351.500H349.500V361.500H340.500Z" strokeWidth="1.200" />
        <path d="M346 290L352 296L358 290M352 296V302M399 343L411 355M411 343L399 355" strokeWidth="1.200" />
      </g>
    </svg>
  );
}

function ViewCube() {
  return (
    <div className="absolute right-2.5 top-9 flex w-24 flex-col items-center">
      <svg width="96" height="100" viewBox="0 0 96 100" aria-label="View cube: top" fontFamily="'Liberation Sans',Arial,sans-serif" textAnchor="middle">
        <circle cx="49" cy="49" r="39.500" fill="none" stroke="#41484f" strokeWidth="9.500" />
        <rect x="30.500" y="30.500" width="37" height="37" fill="#b0b0b0" stroke="#868a8d" />
        <rect x="37" y="37" width="24" height="24" fill="#9fa8ad" />
        <text x="49" y="53" fontSize="9" fontWeight="700" fill="#454c54" fontFamily="Roboto,sans-serif">TOP</text>
        <g fontSize="15" fontWeight="700" fill="#a9acae">
          <text x="49" y="13">N</text>
          <text x="49" y="96">S</text>
          <text x="8" y="55">W</text>
          <text x="90" y="55">E</text>
        </g>
      </svg>
      <button type="button" className="mt-[14px] flex h-[17px] w-12 items-center justify-center gap-1.5 rounded-[4px] border border-[#a5a8b2] bg-[#8e92a0] font-['Liberation_Sans',sans-serif] text-[11px] leading-none text-[#565a66]">
        WCS
        <svg width="8" height="5" viewBox="0 0 8 5" fill="none" stroke="#b4b7c0" aria-hidden="true">
          <path d="M.8.5H7.200L4 4Z" />
        </svg>
      </button>
    </div>
  );
}

function NavItem({ label, className, h, children }: Kids & { label: string; className: string; h: number }) {
  return (
    <button type="button" aria-label={label} className={"flex items-center justify-center " + className}>
      <svg width="24" height={h} viewBox={`0 0 24 ${h}`} fill="none" stroke="#3f454b" strokeWidth="1.200" aria-hidden="true">
        {children}
      </svg>
    </button>
  );
}

const down = <path d="M9 0H15L12 3.500Z" fill="#3f454b" stroke="none" />;

function NavBar() {
  return (
    <div className="absolute right-0 top-[193px] flex h-[212px] w-[31px] flex-col items-center rounded-l border border-r-0 border-[#6b7073] bg-[#565c5f]">
      <NavItem label="Close navigation bar" className="h-2.5 self-end" h={10}><circle cx="19" cy="5" r="3.500" fill="#474d52" /><path d="M17.500 3.500L20.500 6.500M20.500 3.500L17.500 6.500" stroke="#6b7073" /></NavItem>
      <NavItem label="Steering wheel" className="mt-2 h-[22px]" h={22}><path d="M12 1H20Q22.500 1 22.500 4V11A10.500 10 0 1 1 12 1Z" /><circle cx="12" cy="11" r="5.500" /><path d="M5 18L8 15M19 18L16 15M12 5.500A7 6 0 0 0 5 13M12 5.500A7 6 0 0 1 19 13" /></NavItem>
      <NavItem label="Wheel options" className="mt-[7px] h-1" h={4}>{down}</NavItem>
      <span className="mt-1 h-px w-6 bg-[#676c70]" />
      <NavItem label="Pan" className="mt-1 h-6" h={24}><path d="M7.500 18L2 12Q.5 9.500 3 10L7 13L5 5Q5 2.500 7 4L9.500 10L10 2Q11.500 0 12.500 2L13 10L15.500 3Q17.500 2 17.500 4L16.500 11L20 6.500Q22.500 6 22 8L18.500 16Q17 22 15 23H9.500Z" fill="#4f555b" /></NavItem>
      <NavItem label="Zoom" className="mt-1 h-6" h={24}><path d="M1 1L16 16M15 1L1 15M1 5V1H5M11 1H15V5M1 11V15H5" /><circle cx="16" cy="15" r="5" fill="#565c5f" /><path d="M19.500 18.500L23.500 22.500" strokeWidth="2.500" /></NavItem>
      <NavItem label="Zoom options" className="mt-1.5 h-1" h={4}>{down}</NavItem>
      <NavItem label="Orbit" className="mt-1.5 h-[22px]" h={22}><path d="M10.500 21V6H8L12 1L16 6H13.500V21Z" fill="#4f555b" /><path d="M10 9C-2 10 -2 15 8 16.500M14 9C26 10 26 15 15 16M5 13.500L9 16.500L5 19" /></NavItem>
      <NavItem label="Orbit options" className="mt-1.5 h-1" h={4}>{down}</NavItem>
      <span className="mt-1 h-px w-6 bg-[#676c70]" />
      <NavItem label="ShowMotion" className="mt-1 h-6" h={24}><path d="M.5 1.500H6.500V7.500H.5ZM9 1.500H15V7.500H9ZM17 1.500H23V7.500H17ZM.5 10.500H16.500V23H.5Z" /><path d="M6 13V20.500L12 16.800Z" fill="#3f454b" /></NavItem>
      <NavItem label="Navigation bar menu" className="mt-auto h-3 self-end" h={10}><circle cx="19" cy="5" r="3.500" fill="#474d52" /><path d="M17.500 4H20.500M17.500 6H20.500" stroke="#6b7073" /></NavItem>
    </div>
  );
}

function Canvas() {
  return (
    <main className="relative min-h-0 flex-1 overflow-hidden bg-[#222930]">
      <div className="relative flex items-start justify-between pl-0.5 pr-[7px] pt-[5px] text-[12px] leading-[17px] text-[#eceef0]">
        <div className="flex font-['Open_Sans','Noto_Sans',sans-serif]">
          <button type="button">[−]</button>
          <button type="button">[Top]</button>
          <button type="button">[2D Wireframe]</button>
        </div>
        <div className="flex items-center gap-[9px] pt-1">
          <button type="button" aria-label="Minimize viewport">
            <svg width="10" height="10" viewBox="0 0 10 10" aria-hidden="true"><path d="M0 6.500H10V9.500H0Z" fill="#fff" /></svg>
          </button>
          <button type="button" aria-label="Restore viewport">
            <svg width="11" height="10" viewBox="0 0 11 10" fill="none" stroke="#fff" aria-hidden="true"><path d="M3 .7H10V7" strokeWidth="1.400" /><path d="M1.500 3.500H7.500V9H1.500Z" strokeWidth="1.900" /></svg>
          </button>
          <button type="button" aria-label="Close viewport">
            <svg width="9" height="10" viewBox="0 0 9 10" stroke="#fff" strokeWidth="2.200" aria-hidden="true"><path d="M1 1L8 9M8 1L1 9" /></svg>
          </button>
        </div>
      </div>
      <ViewCube />
      <NavBar />
      <Drawing />
    </main>
  );
}

/* ---------- command line ---------- */

const options: [string, string, string][] = [
  ["", "D", "istance"],
  ["", "R", "adius"],
  ["", "A", "ngle"],
  ["", "AR", "ea"],
  ["", "V", "olume"],
  ["", "Q", "uick"],
  ["", "M", "ode"],
  ["e", "X", "it"],
];

function CommandLine() {
  return (
    <footer className="flex h-[23px] shrink-0 justify-center bg-[#222930] pl-[5px] pt-px">
      <div className="flex w-[817px] items-center bg-white font-['DejaVu_Sans_Mono',monospace] text-[11px] leading-[14px] text-black">
        <div className="flex h-full w-[55px] shrink-0 items-center justify-between bg-[#2e3340] pl-0.5 pr-1.5">
          <svg width="6" height="17" viewBox="0 0 6 17" aria-hidden="true">
            <path d="M1.500 0V17M4.500 0V17" stroke="#e6e8ea" strokeWidth="2" strokeDasharray="2 1" />
          </svg>
          <button type="button" aria-label="Close command line" className="pr-1">
            <svg width="9" height="10" viewBox="0 0 9 10" stroke="#d9dbdd" strokeWidth="1.800" aria-hidden="true"><path d="M.8.8L8.200 9.200M8.200.8L.8 9.200" /></svg>
          </button>
          <button type="button" aria-label="Customize">
            <svg width="16" height="16" viewBox="0 0 16 16" aria-hidden="true">
              <path d="M1 15L9 7" stroke="#d9dbdd" strokeWidth="2.600" />
              <path d="M8 8C7 5 9 2 12.500 2L10.500 4.500L12 6.500L15 5C15 8 12 10.500 8 9Z" fill="#d9dbdd" />
            </svg>
          </button>
        </div>
        <button type="button" aria-label="Recent commands" className="ml-1 mr-1.5 flex items-center gap-1">
          <svg width="14" height="12" viewBox="0 0 14 12" fill="none" aria-hidden="true">
            <path d="M.5 0V5M13.500 0V5M1 2.500H13" stroke="#cfd1d4" />
            <path d="M0 7H14V11H0Z" fill="#f0b046" />
            <path d="M2.500 9V11M5 9V11M7.500 9V11M10 9V11" stroke="#9c6d1e" strokeDasharray="1 1" />
          </svg>
          <svg width="8" height="4" viewBox="0 0 8 4" aria-hidden="true"><path d="M0 0H8L4 4Z" fill="#6c6c6c" /></svg>
        </button>
        <label htmlFor="cmd" className="flex items-center gap-1 whitespace-nowrap pt-[5px]">
          <b className="mr-1">MEASUREGEOM</b>
          <span className="mr-2">Move cursor or</span>
          <span className="-mr-0.5">[</span>
          {options.map(([a, k, b]) => (
            <span key={k} className="-mt-0.5 rounded-[3px] bg-[#d2d2d2] px-0.5 py-px">
              {a}
              <span className="text-[#0000f0]">{k}</span>
              {b}
            </span>
          ))}
          <span className="-ml-0.5">]</span>
          <span className="ml-0.5">&lt;eXit&gt;:</span>
        </label>
        <input id="cmd" className="h-full min-w-0 flex-1 bg-transparent pl-1 outline-none" />
        <button type="button" aria-label="Show history" className="px-[3px]">
          <svg width="8" height="4" viewBox="0 0 8 4" aria-hidden="true"><path d="M0 4H8L4 0Z" fill="#6c6c6c" /></svg>
        </button>
      </div>
    </footer>
  );
}

export default function App() {
  return (
    <div className="flex h-screen flex-col overflow-hidden bg-[#222831] font-['Noto_Sans','Open_Sans',sans-serif]">
      <header className="flex h-[45px] shrink-0">
        <button type="button" aria-label="Application menu" className="flex w-[45px] shrink-0 items-start justify-center pr-1.5 pt-1.5">
          <Logo />
        </button>
        <div className="flex min-w-0 flex-1 flex-col">
          <TitleBar />
          <MenuTabs />
        </div>
      </header>
      <Ribbon />
      <FileTabs />
      <Canvas />
      <CommandLine />
    </div>
  );
}
